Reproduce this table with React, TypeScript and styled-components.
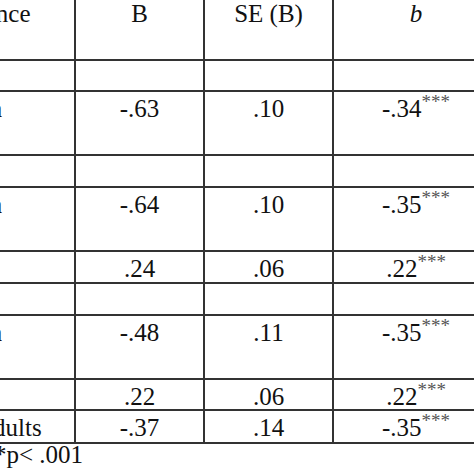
import React from 'react';
import styled, {createGlobalStyle} from 'styled-components';

const GlobalStyle = createGlobalStyle`
  html, body {
    margin: 0;
    padding: 0;
    background: #fff;
    overflow: hidden;
  }
  body {
    font-family: 'Liberation Serif', 'Times New Roman', serif;
    color: #111;
  }
`;

interface RowItem {
    label?: string;
    bold?: boolean;
    b?: string;
    se?: string;
    beta?: string;
    h: number;
}

const rows: RowItem[] = [
    {h: 31},
    {label: 'Ta', bold: true, b: '-.63', se: '.10', beta: '-.34', h: 64},
    {h: 32},
    {label: 'Ta', bold: true, b: '-.64', se: '.10', beta: '-.35', h: 64},
    {b: '.24', se: '.06', beta: '.22', h: 32},
    {h: 32},
    {label: 'Ta', bold: true, b: '-.48', se: '.11', beta: '-.35', h: 64},
    {b: '.22', se: '.06', beta: '.22', h: 31},
    {label: 'Adults', b: '-.37', se: '.14', beta: '-.35', h: 33},
];

const App = () => {
    return (
        <>
            <GlobalStyle/>
            <Page>
                <Table>
                    <Row $h={61}>
                        <LabelCell $header>Since</LabelCell>
                        <Cell $header>B</Cell>
                        <Cell $header>SE (B)</Cell>
                        <Cell $header $last><i>b</i></Cell>
                    </Row>
                    {rows.map((row, i) => (
                        <Row key={i} $h={row.h}>
                            <LabelCell $bold={row.bold}>{row.label}</LabelCell>
                            <Cell>{row.b}</Cell>
                            <Cell>{row.se}</Cell>
                            <Cell $last>
                                {row.beta}
                                {row.beta && <Sig>***</Sig>}
                            </Cell>
                        </Row>
                    ))}
                </Table>
                <Note>***p&lt; .001</Note>
            </Page>
        </>
    );
};

const Page = styled.div`
  width: 474px;
  height: 474px;
  overflow: hidden;
`

const Table = styled.div`
  width: 527px;
  margin-left: -29px;
`

const Row = styled.div<{ $h: number }>`
  display: grid;
  grid-template-columns: 105px 129px 129px 164px;
  height: ${(p) => p.$h}px;
  box-sizing: border-box;
  border-bottom: 2px solid #333;
`

const Cell = styled.div<{ $header?: boolean; $last?: boolean }>`
  box-sizing: border-box;
  padding-top: ${(p) => (p.$header ? 0 : 3)}px;
  border-right: ${(p) => (p.$last ? 'none' : '2px solid #333')};
  font-size: 25px;
  line-height: 28px;
  text-align: center;
  white-space: nowrap;
`

const LabelCell = styled(Cell)<{ $bold?: boolean }>`
  text-align: left;
  padding-left: 4px;
  font-weight: ${(p) => (p.$bold ? 700 : 400)};
`

const Sig = styled.span`
  font-size: 19px;
  color: #555;
  vertical-align: 9px;
  line-height: 0;
`

const Note = styled.div`
  font-size: 25px;
  line-height: 22px;
  margin-left: -31px;
  white-space: nowrap;
`

export default App;
